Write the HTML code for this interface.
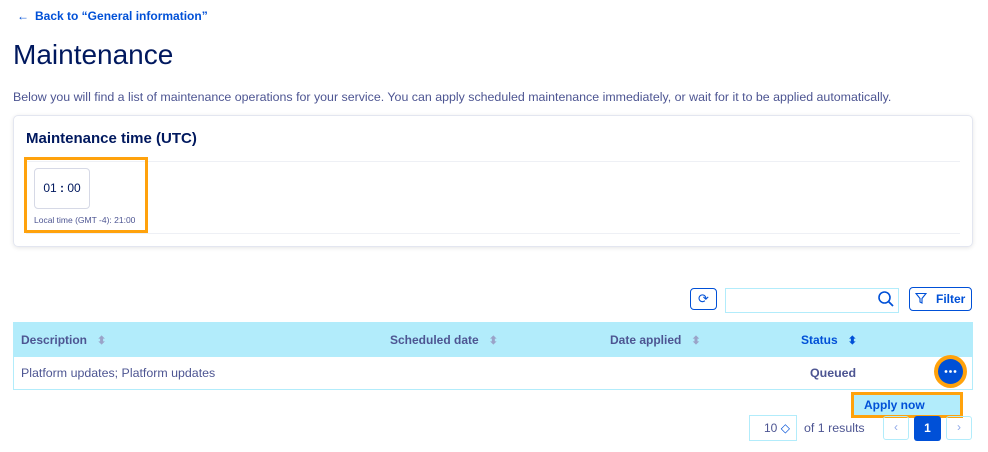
<!DOCTYPE html>
<html><head><meta charset="utf-8"><style>
*{box-sizing:border-box;margin:0;padding:0}
body{width:988px;height:452px;background:#fff;font-family:"Liberation Sans",sans-serif;position:relative;overflow:hidden;color:#000e9c}
.a{position:absolute;white-space:nowrap}
.navy{color:#00185e}
.th{font-weight:bold;font-size:12px;color:#4d5592;top:333px}
.sort{display:inline-block;margin-left:10px;font-size:11px;color:#9aa3c8;vertical-align:0}
.btn{position:absolute;border:1px solid #0050d7;border-radius:4px;background:#fff}
</style></head><body>
<div class="a" style="left:17px;top:9px;font-size:12px;font-weight:bold;color:#0050d7"><span style="font-weight:normal;margin-right:6px">←</span>Back to “General information”</div>
<div class="a navy" style="left:13px;top:39px;font-size:28px">Maintenance</div>
<div class="a" style="left:13px;top:90px;font-size:12.4px;color:#4d5592">Below you will find a list of maintenance operations for your service. You can apply scheduled maintenance immediately, or wait for it to be applied automatically.</div>
<div class="a" style="left:13px;top:115px;width:960px;height:132px;border:1px solid #e3e6f0;border-radius:5px;box-shadow:0 1px 4px rgba(0,0,0,.1)"></div>
<div class="a navy" style="left:26px;top:130px;font-size:15px;font-weight:bold">Maintenance time (UTC)</div>
<div class="a" style="left:26px;top:161px;width:934px;height:1px;background:#eef0f5"></div>
<div class="a" style="left:26px;top:233px;width:934px;height:1px;background:#eef0f5"></div>
<div class="a" style="left:24px;top:157px;width:124px;height:76px;border:3px solid #ffa20c"></div>
<div class="a" style="left:34px;top:168px;width:56px;height:41px;border:1px solid #d6d9e6;border-radius:4px;font-size:12px;color:#00185e;text-align:center;line-height:39px">01 <b>:</b> 00</div>
<div class="a" style="left:34px;top:215px;font-size:8.5px;color:#4d5592">Local time (GMT -4): 21:00</div>

<div class="btn" style="left:690px;top:288px;width:27px;height:22px;text-align:center;font-size:13px;line-height:19px;color:#0050d7">⟳</div>
<div class="a" style="left:725px;top:288px;width:174px;height:25px;border:1px solid #b2ecfb"></div>
<svg class="a" style="left:877px;top:290px" width="18" height="18" viewBox="0 0 18 18"><circle cx="7.5" cy="7.5" r="5.5" fill="none" stroke="#0050d7" stroke-width="1.6"/><path d="M11.5 11.5l4.5 4.5" stroke="#0050d7" stroke-width="1.8"/></svg>
<div class="btn" style="left:909px;top:287px;width:63px;height:24px;font-size:12px;font-weight:bold;color:#0050d7;line-height:22px;padding-left:26px">Filter</div>
<svg class="a" style="left:915px;top:292px" width="12" height="12" viewBox="0 0 12 12"><path d="M1 1.5h10L7 6.5V11L5 10V6.5z" fill="none" stroke="#0050d7" stroke-width="1.1"/></svg>

<div class="a" style="left:13px;top:322px;width:960px;height:35px;background:#b2ecfb"></div>
<div class="a" style="left:13px;top:357px;width:960px;height:33px;border:1px solid #b2ecfb;border-top:none"></div>
<div class="a th" style="left:21px">Description<span class="sort">⬍</span></div>
<div class="a th" style="left:390px">Scheduled date<span class="sort">⬍</span></div>
<div class="a th" style="left:610px">Date applied<span class="sort">⬍</span></div>
<div class="a th" style="left:801px;color:#0050d7">Status<span class="sort" style="color:#0050d7">⬍</span></div>
<div class="a" style="left:21px;top:366px;font-size:12.4px;color:#4d5592">Platform updates; Platform updates</div>
<div class="a" style="left:810px;top:366px;font-size:12.4px;font-weight:bold;color:#4d5592">Queued</div>
<div class="a" style="left:934px;top:355px;width:33px;height:33px;border-radius:50%;background:#ffa20c"></div>
<div class="a" style="left:938px;top:359px;width:25px;height:25px;border-radius:50%;background:#0050d7"></div>
<svg class="a" style="left:938px;top:359px" width="25" height="25"><circle cx="8" cy="12.5" r="1.4" fill="#fff"/><circle cx="12.5" cy="12.5" r="1.4" fill="#fff"/><circle cx="17" cy="12.5" r="1.4" fill="#fff"/></svg>
<div class="a" style="left:851px;top:392px;width:112px;height:26px;border:3px solid #ffa20c;background:#b2ecfb;font-size:12px;font-weight:bold;color:#0050d7;padding-left:10px;line-height:20px">Apply now</div>

<div class="a" style="left:749px;top:415px;width:48px;height:26px;border:1px solid #b2ecfb;font-size:12px;color:#4d5592;line-height:24px;padding-left:14px">10 <span style="color:#0050d7">◇</span></div>
<div class="a" style="left:804px;top:421px;font-size:12.4px;color:#4d5592">of 1 results</div>
<div class="a" style="left:883px;top:416px;width:26px;height:24px;border:1px solid #b2ecfb;border-radius:3px;text-align:center;color:#8fa8e8;font-size:12px;line-height:20px">‹</div>
<div class="a" style="left:914px;top:416px;width:27px;height:25px;background:#0050d7;border-radius:3px;text-align:center;color:#fff;font-size:12px;font-weight:bold;line-height:25px">1</div>
<div class="a" style="left:946px;top:416px;width:26px;height:24px;border:1px solid #b2ecfb;border-radius:3px;text-align:center;color:#8fa8e8;font-size:12px;line-height:20px">›</div>
</body></html>
